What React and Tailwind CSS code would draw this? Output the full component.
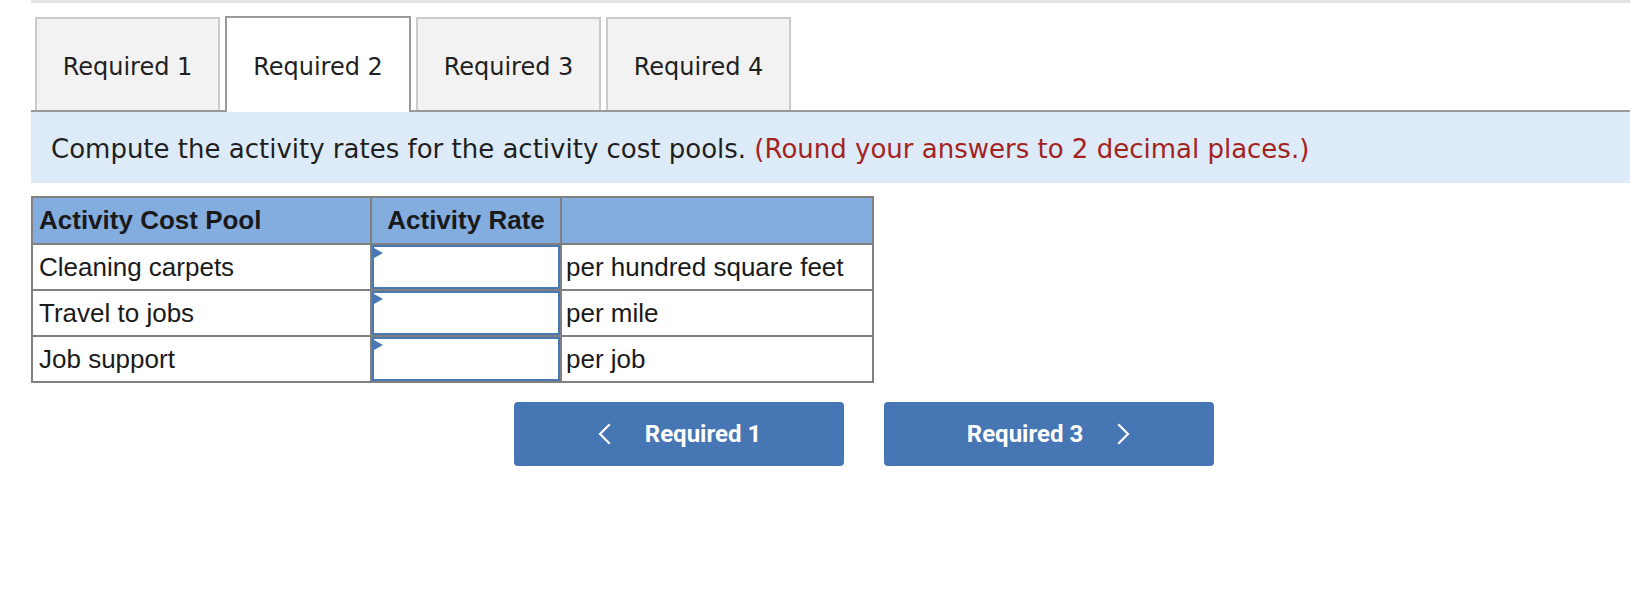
import React from 'react';

const tabs = ['Required 1', 'Required 2', 'Required 3', 'Required 4'];

const rows = [
  { pool: 'Cleaning carpets', unit: 'per hundred square feet' },
  { pool: 'Travel to jobs', unit: 'per mile' },
  { pool: 'Job support', unit: 'per job' },
];

// Pestaña superior (la activa tapa la línea inferior)
const Tab = ({ label, active }) =>
  active ? (
    <div className="w-[186px] h-[96px] mb-[-2px] pt-[4px] bg-white border-2 border-b-0 border-[#999999] flex items-center justify-center text-[#1f1f1f]">
      {label}
    </div>
  ) : (
    <div className="w-[185px] h-[93px] pt-[4px] bg-[#f2f2f2] border-2 border-b-0 border-[#cbcbcb] flex items-center justify-center text-[#1f1f1f]">
      {label}
    </div>
  );

const Chevron = ({ dir }) => (
  <svg width="14" height="22" viewBox="0 0 14 22" fill="none">
    <polyline
      points={dir === 'left' ? '12,2 3,11 12,20' : '2,2 11,11 2,20'}
      stroke="white"
      strokeWidth="2.2"
      strokeLinecap="square"
    />
  </svg>
);

export default function App() {
  return (
    <div className="w-[1630px] h-[594px] bg-white overflow-hidden">
      <div className="pl-[31px]">
        <div className="h-[3px] bg-[#e2e2e2]"></div>

        {/* Tabs */}
        <div className="mt-[13px] flex items-end gap-[5px] pl-[4px] border-b-2 border-[#999999] font-['DejaVu_Sans',sans-serif] text-[24px]">
          {tabs.map((t, i) => (
            <Tab key={t} label={t} active={i === 1} />
          ))}
        </div>

        {/* Instrucción */}
        <div className="h-[71px] pt-[3px] bg-[#ddebf8] flex items-center pl-[20px] font-['DejaVu_Sans',sans-serif] text-[26px] text-[#1f1f1f]">
          <span>
            Compute the activity rates for the activity cost pools.{' '}
            <span className="text-[#a4221f]">(Round your answers to 2 decimal places.)</span>
          </span>
        </div>

        {/* Tabla */}
        <table className="mt-[13px] table-fixed border-collapse border-2 border-[#808080] font-['Liberation_Sans',Arial,sans-serif] text-[26px] text-[#1a1a1a] w-[841px]">
          <colgroup>
            <col className="w-[339px]" />
            <col className="w-[190px]" />
            <col className="w-[312px]" />
          </colgroup>
          <thead>
            <tr className="h-[47px] bg-[#83acdf]">
              <th className="border-2 border-[#808080] text-left font-bold pl-[6px]">Activity Cost Pool</th>
              <th className="border-2 border-[#808080] text-center font-bold">Activity Rate</th>
              <th className="border-2 border-[#808080]"></th>
            </tr>
          </thead>
          <tbody>
            {rows.map((r) => (
              <tr key={r.pool} className="h-[46px]">
                <td className="border-2 border-[#808080] pl-[6px] leading-none">{r.pool}</td>
                <td className="border-2 border-[#808080] p-0">
                  <div className="relative h-[44px] border-2 border-[#4a78b5] bg-white">
                    <div className="absolute left-0 top-[1px] w-0 h-0 border-y-[5px] border-y-transparent border-l-[9px] border-l-[#4a78b5]"></div>
                  </div>
                </td>
                <td className="border-2 border-[#808080] pl-[4px] leading-none">{r.unit}</td>
              </tr>
            ))}
          </tbody>
        </table>

        {/* Botones */}
        <div className="mt-[19px] ml-[483px] flex gap-[40px] font-['Roboto',sans-serif] font-bold text-[24px] text-white">
          <button className="w-[330px] h-[64px] rounded-[4px] bg-[#4676b3] flex items-center justify-center gap-[34px]">
            <Chevron dir="left" />
            <span>Required 1</span>
          </button>
          <button className="w-[330px] h-[64px] rounded-[4px] bg-[#4676b3] flex items-center justify-center gap-[34px]">
            <span>Required 3</span>
            <Chevron dir="right" />
          </button>
        </div>
      </div>
    </div>
  );
}
